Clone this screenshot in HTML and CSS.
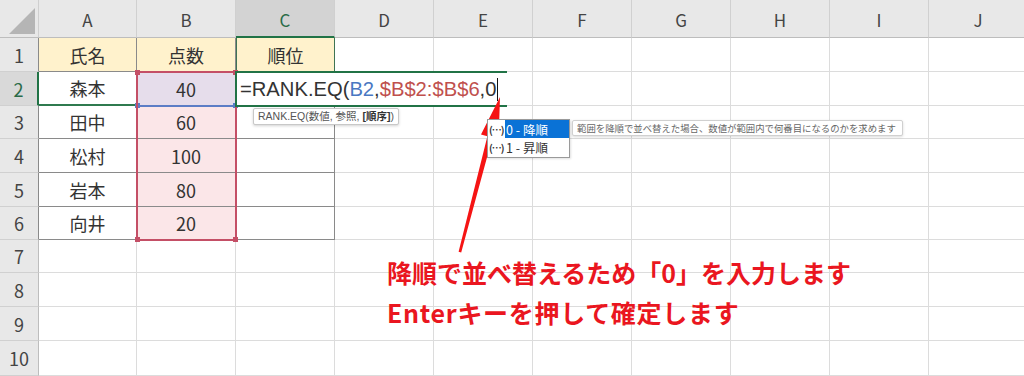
FILE: index.html
```html
<!DOCTYPE html>
<html lang="ja">
<head>
<meta charset="utf-8">
<link rel="stylesheet" href="styles.css">
</head>
<body>
<div class="stage">
  <div class="sheet">
    <div class="corner"><span class="tri"></span></div>
    <div class="ch">A</div><div class="ch">B</div><div class="ch sel">C</div><div class="ch">D</div><div class="ch">E</div><div class="ch">F</div><div class="ch">G</div><div class="ch">H</div><div class="ch">I</div><div class="ch">J</div>

    <div class="rh trow">1</div>
    <div class="c t hd">氏名</div><div class="c t hd">点数</div><div class="c t hd fc">順位</div>
    <div class="c"></div><div class="c"></div><div class="c"></div><div class="c"></div><div class="c"></div><div class="c"></div><div class="c"></div>

    <div class="rh trow rsel">2</div>
    <div class="c t fr">森本</div><div class="c t ref1">40</div><div class="c t"></div>
    <div class="c"></div><div class="c"></div><div class="c"></div><div class="c"></div><div class="c"></div><div class="c"></div><div class="c"></div>

    <div class="rh trow">3</div>
    <div class="c t">田中</div><div class="c t ref2">60</div><div class="c t"></div>
    <div class="c"></div><div class="c"></div><div class="c"></div><div class="c"></div><div class="c"></div><div class="c"></div><div class="c"></div>

    <div class="rh trow">4</div>
    <div class="c t">松村</div><div class="c t ref2">100</div><div class="c t"></div>
    <div class="c"></div><div class="c"></div><div class="c"></div><div class="c"></div><div class="c"></div><div class="c"></div><div class="c"></div>

    <div class="rh trow">5</div>
    <div class="c t">岩本</div><div class="c t ref2">80</div><div class="c t"></div>
    <div class="c"></div><div class="c"></div><div class="c"></div><div class="c"></div><div class="c"></div><div class="c"></div><div class="c"></div>

    <div class="rh trow">6</div>
    <div class="c t">向井</div><div class="c t ref2">20</div><div class="c t"></div>
    <div class="c"></div><div class="c"></div><div class="c"></div><div class="c"></div><div class="c"></div><div class="c"></div><div class="c"></div>

    <div class="rh">7</div>
    <div class="c"></div><div class="c"></div><div class="c"></div><div class="c"></div><div class="c"></div><div class="c"></div><div class="c"></div><div class="c"></div><div class="c"></div><div class="c"></div>
    <div class="rh">8</div>
    <div class="c"></div><div class="c"></div><div class="c"></div><div class="c"></div><div class="c"></div><div class="c"></div><div class="c"></div><div class="c"></div><div class="c"></div><div class="c"></div>
    <div class="rh">9</div>
    <div class="c"></div><div class="c"></div><div class="c"></div><div class="c"></div><div class="c"></div><div class="c"></div><div class="c"></div><div class="c"></div><div class="c"></div><div class="c"></div>
    <div class="rh">10</div>
    <div class="c"></div><div class="c"></div><div class="c"></div><div class="c"></div><div class="c"></div><div class="c"></div><div class="c"></div><div class="c"></div><div class="c"></div><div class="c"></div>
  </div>

  <div class="refbox blue"><i class="sq bl sqb"></i><i class="sq br sqb"></i></div>
  <div class="refbox red"><i class="sq tl"></i><i class="sq tr"></i><i class="sq bl"></i><i class="sq br"></i></div>

  <div class="edit"><span class="f-dark">=RANK.EQ(</span><span class="f-blue">B2</span><span class="f-dark">,</span><span class="f-red">$B$2:$B$6</span><span class="f-dark">,0</span><span class="caret"></span></div>

  <div class="tip">RANK.EQ(数値, 参照, <b>[順序]</b>)</div>

  <svg class="arrow" width="1024" height="376" viewBox="0 0 1024 376">
    <polygon points="500,97 498.6,139 492.4,137.4 461.2,252.5 458.6,251.8 487.4,136.2 481,134.4" fill="#f51414"/>
  </svg>

  <div class="list">
    <div class="item"><span class="ico">(…)</span><span class="hl">0 - 降順</span></div>
    <div class="item"><span class="ico">(…)</span><span class="lbl">1 - 昇順</span></div>
  </div>
  <div class="desc">範囲を降順で並べ替えた場合、数値が範囲内で何番目になるのかを求めます</div>

  <div class="note">
    <div class="line">降順で並べ替えるため「0」を入力します</div>
    <div class="line l2">Enterキーを押して確定します</div>
  </div>
</div>
</body>
</html>
```

FILE: styles.css
```css
* { box-sizing: border-box; }
html, body { margin: 0; padding: 0; }
body {
  width: 1024px;
  height: 376px;
  overflow: hidden;
  background: #ffffff;
  font-family: "Noto Sans CJK JP", "Liberation Sans", sans-serif;
}
.stage {
  position: relative;
  width: 1024px;
  height: 376px;
  overflow: hidden;
}
.sheet {
  display: grid;
  grid-template-columns: 39px 98px repeat(9, 99px);
  grid-template-rows: 38px 34px 34px 33px 34px 34px 33px 33px 34px 34px 35px;
  width: 1029px;
}
.corner {
  background: #e8e8e8;
  border-right: 1px solid #cfcfcf;
  border-bottom: 1px solid #bdbdbd;
  position: relative;
}
.tri {
  position: absolute;
  right: 3px;
  bottom: 3px;
  width: 26px;
  height: 26px;
  background: #b5b5b5;
  clip-path: polygon(100% 0, 100% 100%, 0 100%);
}
.ch {
  background: #e8e8e8;
  border-right: 1px solid #d0d0d0;
  border-bottom: 1px solid #bdbdbd;
  display: flex;
  align-items: center;
  justify-content: center;
  font-size: 17px;
  color: #444;
  padding-top: 2px;
}
.ch.sel {
  background: #d3d3d3;
  color: #2a6b48;
  border-bottom: 2px solid #217346;
}
.rh {
  background: #e8e8e8;
  border-right: 1px solid #bdbdbd;
  border-bottom: 1px solid #d0d0d0;
  display: flex;
  align-items: center;
  justify-content: center;
  font-size: 18px;
  color: #444;
}
.rh.trow { border-right-color: #8a8a8a; }
.rh.rsel {
  background: #d9d9d9;
  color: #2a6b48;
  border-right: 2px solid #217346;
}
.c {
  border-right: 1px solid #dcdcdc;
  border-bottom: 1px solid #dcdcdc;
  display: flex;
  align-items: center;
  justify-content: center;
  font-size: 18px;
  color: #333;
}
.c.t {
  border-right-color: #8a8a8a;
  border-bottom-color: #8a8a8a;
}
.c.hd { background: #fff2cc; }
.c.fc {
  border-left: 1px solid #3f7454;
  border-right-color: #3f7454;
}
.c.fr { border-bottom: 2px solid #2f7a4f; }
.c.ref1 { background: #e6ddeb; }
.c.ref2 { background: #fbe6e8; }

.refbox {
  position: absolute;
  left: 136px;
  top: 71px;
  width: 101px;
}
.refbox.blue {
  height: 36px;
  border: 2px solid #5b7dc6;
}
.refbox.red {
  height: 170px;
  border: 2px solid #c44f66;
}
.sq {
  position: absolute;
  width: 5px;
  height: 5px;
  background: #c44f66;
}
.sq.sqb { background: #5b7dc6; }
.sq.tl { left: -3px; top: -3px; }
.sq.tr { right: -3px; top: -3px; }
.sq.bl { left: -3px; bottom: -3px; }
.sq.br { right: -3px; bottom: -3px; }

.edit {
  position: absolute;
  left: 235px;
  top: 71px;
  width: 272px;
  height: 36px;
  background: #fff;
  border-left: 2px solid #217346;
  border-top: 2px solid #217346;
  border-bottom: 2px solid #217346;
  padding-left: 3px;
  display: flex;
  align-items: center;
  font-family: "Liberation Sans", sans-serif;
  font-size: 20.2px;
  white-space: nowrap;
}
.f-dark { color: #333; }
.f-blue { color: #4a78c2; }
.f-red { color: #c0504d; }
.caret {
  display: inline-block;
  width: 1px;
  height: 23px;
  background: #111;
  margin-left: 1px;
}

.tip {
  position: absolute;
  left: 253px;
  top: 108px;
  height: 17px;
  padding: 0 4px;
  background: #fff;
  border: 1px solid #c8c8c8;
  border-radius: 2px;
  box-shadow: 0 1px 3px rgba(0,0,0,0.18);
  font-family: "Liberation Sans", "Noto Sans CJK JP", sans-serif;
  font-size: 10.5px;
  line-height: 15px;
  color: #555;
  white-space: nowrap;
}
.tip b { color: #333; }

.list {
  position: absolute;
  left: 487px;
  top: 119px;
  width: 83px;
  height: 39px;
  background: #fff;
  border: 1px solid #9a9a9a;
  display: flex;
  flex-direction: column;
  box-shadow: 1px 1px 2px rgba(0,0,0,0.12);
}
.item {
  height: 18px;
  display: flex;
  align-items: center;
  font-size: 12.5px;
  color: #333;
  white-space: nowrap;
}
.ico {
  width: 17px;
  font-size: 10px;
  font-weight: bold;
  letter-spacing: -1px;
  color: #333;
  padding-left: 1px;
}
.hl {
  flex: 1;
  height: 18px;
  background: #0a72d6;
  color: #fff;
  display: flex;
  align-items: center;
  padding-left: 1px;
}
.lbl { padding-left: 1px; }

.desc {
  position: absolute;
  left: 572px;
  top: 120px;
  width: 331px;
  height: 16px;
  padding-left: 4px;
  background: #fff;
  border: 1px solid #d0d0d0;
  border-radius: 2px;
  box-shadow: 0 1px 3px rgba(0,0,0,0.15);
  font-size: 9.4px;
  line-height: 14px;
  color: #666;
  white-space: nowrap;
}

.arrow {
  position: absolute;
  left: 0;
  top: 0;
}

.note {
  position: absolute;
  left: 387px;
  top: 252px;
  display: flex;
  flex-direction: column;
  color: #ea1620;
  font-weight: bold;
  font-size: 25px;
  white-space: nowrap;
}
.note .line {
  height: 40px;
  line-height: 40px;
}
.note .l2 { letter-spacing: 0.7px; }
```
